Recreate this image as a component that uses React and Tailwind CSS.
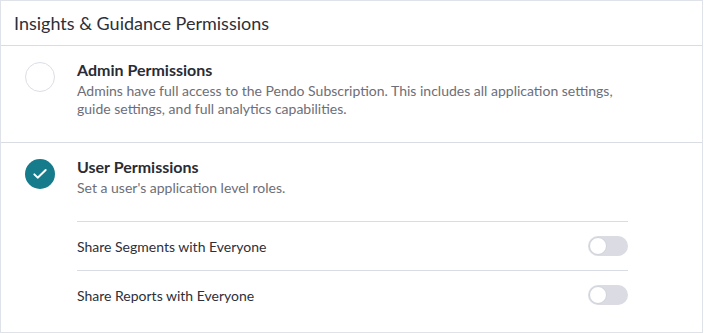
import React from 'react';

const rows = ['Share Segments with Everyone', 'Share Reports with Everyone'];

function Toggle() {
    return (
        <div className="w-[40px] h-[20px] rounded-full bg-[#dadbe3] flex items-center px-[1px]">
            <div className="w-[18px] h-[18px] rounded-full bg-white border border-[#d0d2da]" />
        </div>
    );
}

export default function App() {
    return (
        <div className="w-[704px] h-[333px] bg-white font-['Lato',sans-serif] text-[#2a2c35]">
            <div className="w-[703px] h-[333px] border border-[#dfe2e8] flex flex-col">
                {/* Header */}
                <div className="h-[45px] px-[13px] flex items-center border-b border-[#dadce4] text-[18px] text-[#2e2f38]">
                    Insights &amp; Guidance Permissions
                </div>

                {/* Admin */}
                <div className="h-[97px] flex pt-[16px] border-b border-[#dadce4]">
                    <div className="w-[76px] flex justify-center pl-[1px]">
                        <div className="w-[30px] h-[30px] rounded-full border border-[#dcdee6] bg-white" />
                    </div>
                    <div className="w-[552px]">
                        <div className="text-[16px] font-bold leading-[18px] mt-[-1px]">Admin Permissions</div>
                        <p className="text-[14px] leading-[18px] text-[#6d6e78] mt-[3px]">
                            Admins have full access to the Pendo Subscription. This includes all application settings, guide settings, and full analytics capabilities.
                        </p>
                    </div>
                </div>

                {/* User */}
                <div className="flex-1 flex pt-[16px]">
                    <div className="w-[76px] flex justify-center pl-[1px]">
                        <div className="w-[30px] h-[30px] rounded-full bg-[#167b8b] flex items-center justify-center">
                            <svg width="16" height="16" viewBox="0 0 24 24" fill="none" stroke="white" strokeWidth="3" strokeLinecap="round" strokeLinejoin="round">
                                <path d="M3.5 12.5l5 5L20.5 6" />
                            </svg>
                        </div>
                    </div>
                    <div className="w-[551px]">
                        <div className="text-[16px] font-bold leading-[18px] mt-[-1px]">User Permissions</div>
                        <p className="text-[14px] leading-[18px] text-[#6d6e78] mt-[3px]">Set a user's application level roles.</p>
                        <div className="mt-[24px]">
                            {rows.map((r) => (
                                <div key={r} className="h-[49px] border-t border-[#dadce4] flex items-center justify-between text-[14px] text-[#2e2f38]">
                                    <span>{r}</span>
                                    <Toggle />
                                </div>
                            ))}
                        </div>
                    </div>
                </div>
            </div>
        </div>
    );
}
